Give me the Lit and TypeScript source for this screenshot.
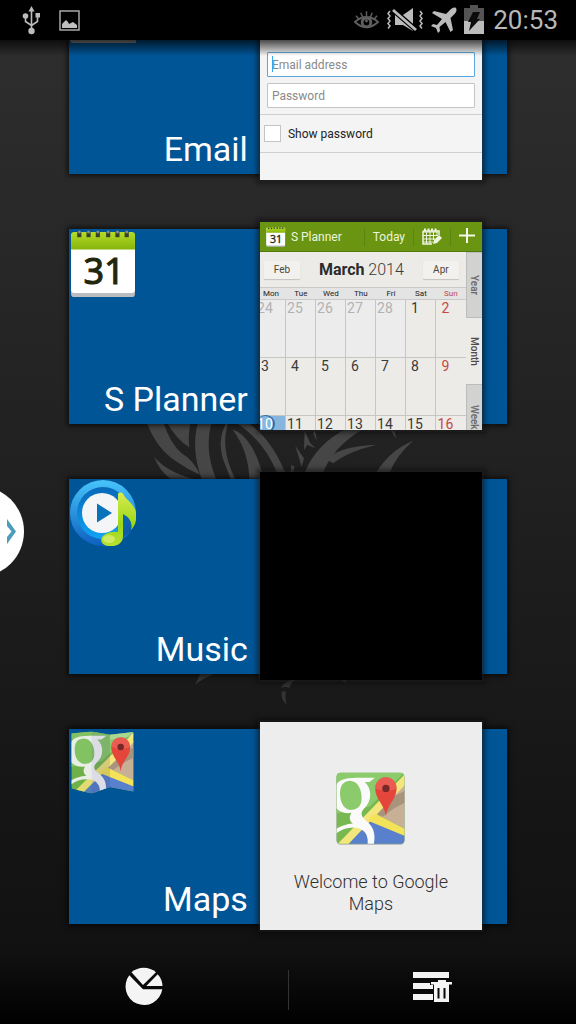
import { LitElement, html, svg, css } from "lit";
import { customElement, property } from "lit/decorators.js";

const plannerIcon = html`<svg viewBox="0 0 64 66" aria-hidden="true">
  <defs>
    <linearGradient id="lime" x1="0" y1="0" x2="0" y2="1">
      <stop offset="0" stop-color="#b4dc28" /><stop offset="1" stop-color="#86b40a" />
    </linearGradient>
  </defs>
  <rect x="1" y="5" width="62" height="60" rx="3" fill="#b9bcc0" />
  <rect x="1" y="3" width="62" height="58" rx="3" fill="#fff" />
  <path d="M1 19V5a3 3 0 0 1 3-3h56a3 3 0 0 1 3 3v14z" fill="url(#lime)" />
  ${[9, 18, 27, 37, 46, 55].map((x) => svg`<path d="M${x} 2v5" stroke="#3a3f30" stroke-width="4" /><circle cx=${x} cy="2" r="1.5" fill="#888" />`)}
  <text x="33" y="52" text-anchor="middle" font-family="'Noto Sans', 'Open Sans', sans-serif" font-weight="400" font-size="35" fill="#1f260c" stroke="#1f260c" stroke-width="1">31</text>
</svg>`;

const emailIcon = html`<svg viewBox="0 0 64 66" aria-hidden="true">
  <rect x="0" y="14" width="66" height="47" rx="3" fill="#a0a0a0" />
  <rect x="0" y="14" width="66" height="43" rx="3" fill="#e8e8e8" />
  <path d="M2 16l31 26 31-26" fill="none" stroke="#a8a8a8" stroke-width="2" />
</svg>`;

const musicIcon = html`<svg viewBox="0 0 66 66" aria-hidden="true">
  <defs>
    <linearGradient id="ring" x1="0" y1="0" x2="0" y2="1">
      <stop offset="0" stop-color="#48c4fa" /><stop offset="1" stop-color="#0d5fc0" />
    </linearGradient>
    <linearGradient id="disc" x1="0" y1="0" x2="0" y2="1">
      <stop offset="0" stop-color="#0868b8" /><stop offset="1" stop-color="#10a4f4" />
    </linearGradient>
    <linearGradient id="note" x1="0" y1="0" x2="0" y2="1">
      <stop offset="0" stop-color="#d8ec50" /><stop offset=".6" stop-color="#9cd818" /><stop offset="1" stop-color="#b8e030" />
    </linearGradient>
  </defs>
  <circle cx="33" cy="33" r="33" fill="url(#ring)" />
  <circle cx="33" cy="33" r="26" fill="url(#disc)" />
  <circle cx="32" cy="33" r="20" fill="#f3f5f7" />
  <path d="M27 23.500v19l15-9.500z" fill="#0873b8" />
  <path d="M53 28q12 4 9 22L50 60z" fill="#07508f" opacity=".65" />
  <path d="M48 13.500q3-2 5 0C56 22 71 25 65 44q-2 4-4 6 3-10-8-16v22c0 9-9 11-15 10-7-1-9-7-4-11 4-3 9-4 14-3z" fill="url(#note)" />
  <ellipse cx="39" cy="59" rx="6" ry="4" fill="#e4f488" opacity=".6" />
</svg>`;

const mapArt = svg`
  <path d="M80 36h206v216H80z" fill="#78b850" />
  <path d="M80 36h206L180 140 80 160z" fill="#8ccb6c" />
  <path d="M286 70L197 160l89 46z" fill="#c8b096" />
  <path d="M286 92l-40 20-49 48 22 10q34-28 67-42z" fill="#a8937c" />
  <path d="M178 180l108 46v26H118z" fill="#5880cc" />
  <path d="M286 42v33L116 252H84z" fill="#f2e67c" />
  <path d="M196 160l90 46v21L172 180z" fill="#f4e258" />
  <path fill-rule="evenodd" fill="#fafafa" d="M80 76C92 50 125 53 196 53L180 66H166C188 86 188 124 164 145C150 160 156 170 174 185C196 204 197 226 193 252H174C178 226 166 208 144 203Q108 198 80 220V206Q104 192 130 190C118 180 120 168 126 158C108 162 90 156 80 143ZM92 100C92 132 108 152 130 149C152 146 160 128 155 98C150 72 136 62 120 62C100 64 92 78 92 100Z" />`;

const pinArt = svg`
  <path d="M229 168C225 132 197 118 197 85a32 33 0 0 1 64 0C261 118 233 132 229 168Z" fill="#e4463c" />
  <path d="M197 85a32 33 0 0 1 64 0q-30 14-64 0z" fill="#f07068" opacity=".5" />
  <circle cx="229" cy="85" r="11" fill="#782828" />`;

const mapsIcon = html`<svg viewBox="34 46 192 192" aria-hidden="true">
  <defs><clipPath id="fold"><path d="M38 56L97 50 150 60 219 52V225L150 212 97 231 38 216Z" /></clipPath></defs>
  <g clip-path="url(#fold)">
    <g transform="translate(-34 18) scale(.887 .848)">${mapArt}</g>
    <path d="M38 50h59v181H38z" fill="#1e5a00" opacity=".08" />
    <path d="M97 44l53 16v160l-53 15z" fill="#202860" opacity=".14" />
    <path d="M150 44h69v20l-69 10z" fill="#fff" opacity=".25" />
  </g>
  <g transform="translate(-16 22) scale(.862)">${pinArt}</g>
</svg>`;

const mapsLogo = html`<svg viewBox="80 36 206 218" aria-hidden="true">
  <defs><clipPath id="tile"><rect x="82" y="38" width="202" height="212" rx="12" /></clipPath></defs>
  <rect x="81" y="40" width="204" height="213" rx="13" fill="#b0b0b0" />
  <g clip-path="url(#tile)">${mapArt}</g>
  ${pinArt}
</svg>`;

/** One recent application: blue plate, name, icon and a live thumbnail. */
@customElement("task-card")
export class TaskCard extends LitElement {
  @property() name = "";

  static styles = css`
    :host {
      display: grid;
      grid-template-columns: minmax(0, 1fr) 222px 25px;
      flex: none;
      background: #005596;
      box-shadow: 0 0 5px 2px rgba(0, 0, 0, 0.6);
    }
    .info {
      display: flex;
      flex-direction: column;
      justify-content: space-between;
      padding: 1px 12px 5px 1px;
    }
    .icon {
      width: 66px;
      height: 66px;
    }
    .name {
      margin: 0;
      font-size: 34px;
      line-height: 40px;
      font-weight: 400;
      text-align: right;
      color: #fff;
    }
    .thumb {
      height: 208px;
      margin: -7px 0 -6px;
      overflow: hidden;
      box-shadow: 0 0 0 2px rgba(40, 40, 40, 0.3), 0 0 4px 4px rgba(0, 0, 0, 0.35);
    }
  `;

  render() {
    return html`
      <div class="info">
        <div class="icon"><slot name="icon"></slot></div>
        <h2 class="name">${this.name}</h2>
      </div>
      <div class="thumb"><slot></slot></div>
    `;
  }
}

@customElement("email-preview")
export class EmailPreview extends LitElement {
  static styles = css`
    :host {
      display: flex;
      flex-direction: column;
      justify-content: flex-end;
      height: 100%;
      background: #f4f4f4;
      font-size: 12px;
      color: #222;
    }
    .fields {
      display: grid;
      gap: 6px;
      padding: 0 7px 6px;
    }
    .field {
      box-sizing: border-box;
      width: 100%;
      height: 25px;
      padding: 0 4px;
      border: 1px solid #c4c4c4;
      border-radius: 1px;
      background: #fff;
      font: inherit;
      outline: none;
    }
    .field::placeholder {
      color: #8a8a8a;
      opacity: 1;
    }
    .wrap {
      display: grid;
      position: relative;
    }
    .focused {
      border: 1px solid #5aa6de;
    }
    .caret {
      position: absolute;
      left: 5px;
      top: 4px;
      width: 1px;
      height: 16px;
      background: #33aaee;
    }
    .show {
      display: flex;
      align-items: center;
      gap: 7px;
      height: 37px;
      padding-left: 4px;
      border: solid #cfcfcf;
      border-width: 1px 0;
      margin-bottom: 27px;
    }
    .check {
      appearance: none;
      width: 17px;
      height: 17px;
      margin: 0;
      border: 1px solid #c4c4c4;
      background: #fff;
    }
  `;

  render() {
    return html`
      <div class="fields">
        <div class="wrap">
          <input class="field focused" type="email" placeholder="Email address" aria-label="Email address" />
          <span class="caret"></span>
        </div>
        <input class="field" type="password" placeholder="Password" aria-label="Password" />
      </div>
      <div class="show">
        <input class="check" type="checkbox" id="show" />
        <label for="show">Show password</label>
      </div>
    `;
  }
}

@customElement("planner-preview")
export class PlannerPreview extends LitElement {
  static styles = css`
    :host {
      display: flex;
      flex-direction: column;
      height: 100%;
      background: #ecebe7;
      color: #3a3a3a;
    }
    button {
      padding: 0;
      border: 0;
      background: none;
      font: inherit;
      color: inherit;
    }
    .bar {
      display: grid;
      grid-template-columns: 20px minmax(0, 1fr) 49px 37px 32px;
      align-items: center;
      flex: none;
      height: 30px;
      padding-left: 6px;
      box-sizing: border-box;
      border-bottom: 1px solid #55780e;
      background: #6a9512;
      color: #eef4de;
      font-size: 12px;
      line-height: 18px;
    }
    .bar svg {
      display: block;
      height: 20px;
      margin: 0 auto;
    }
    .title {
      padding-left: 5px;
    }
    .tool {
      display: flex;
      align-items: center;
      justify-content: center;
      border-left: 1px solid #5c8410;
      height: 18px;
    }
    .body {
      display: flex;
      flex: 1;
      min-height: 0;
    }
    .calendar {
      flex: 1;
      min-width: 0;
      overflow: hidden;
    }
    .month {
      display: flex;
      align-items: center;
      justify-content: space-between;
      height: 35px;
      padding: 0 7px 0 4px;
    }
    .month h3 {
      margin: 0;
      font-size: 16px;
      font-weight: 300;
    }
    .month b {
      font-weight: 700;
      color: #2c2c2c;
    }
    .step {
      width: 36px;
      height: 18px;
      border-radius: 1px;
      background: #f2f1ed;
      box-shadow: 0 1px 1px #c4c3bf;
      font-size: 10px;
      color: #4c4838;
    }
    table {
      width: 210px;
      margin-left: -4px;
      table-layout: fixed;
      border-spacing: 0;
    }
    th {
      height: 11px;
      padding: 0;
      border: solid #c9c9c9;
      border-width: 1px 0;
      background: #e4e4e4;
      font-size: 8px;
      line-height: 11px;
      font-weight: 400;
      color: #222;
    }
    td {
      box-sizing: border-box;
      height: 58px;
      padding: 0 11px 0 0;
      border: solid #c6c6c6;
      border-width: 0 1px 1px 0;
      vertical-align: top;
      text-align: center;
      font-size: 14px;
      line-height: 17px;
    }
    td:last-child {
      border-right: 0;
    }
    .past {
      background: #ececed;
      color: #b2b2b2;
    }
    .sunday {
      color: #c44848;
    }
    .today {
      background: #86b6de;
      color: #fff;
    }
    .today span {
      border-radius: 50%;
      box-shadow: 1px 0 0 1px #2b72a6;
    }
    .tabs {
      display: flex;
      flex-direction: column;
      flex: none;
      width: 16px;
      overflow: hidden;
    }
    .tab {
      flex: none;
      height: 66px;
      writing-mode: vertical-rl;
      border: 1px solid #bcbcbc;
      border-right: 0;
      background: #d2d2d1;
      font-size: 10px;
      font-weight: 500;
      color: #686868;
      text-align: center;
      line-height: 16px;
    }
    .current {
      border: 0;
      background: none;
      color: #4c4c4c;
    }
  `;

  private weeks = [
    [24, 25, 26, 27, 28, 1, 2],
    [3, 4, 5, 6, 7, 8, 9],
    [10, 11, 12, 13, 14, 15, 16],
  ];

  private cellClass(day: number, week: number, column: number) {
    if (week === 0 && day > 20) return "past";
    if (day === 10) return "today";
    return column === 6 ? "sunday" : "";
  }

  render() {
    return html`
      <div class="bar">
        ${plannerIcon}
        <span class="title">S Planner</span>
        <button class="tool">Today</button>
        <button class="tool" aria-label="Calendars">
          <svg viewBox="0 0 20 20" width="20" aria-hidden="true">
            <path d="M1 4h16v4M1 4v13h9" fill="none" stroke="#eef4de" stroke-width="1.500" />
            <path d="M1 5h15M1 8.500h15M1 12h12M1 15h10M4.500 5v12M8 5v12M11.500 5v8M15 5v4" stroke="#eef4de" stroke-width="1" />
            <path d="M3 1.500v3M6.500 1.500v3M10 1.500v3M13.500 1.500v3" stroke="#eef4de" stroke-width="2" />
            <path d="M11 17l1-4 5-5 3 3-5 5z" fill="#eef4de" />
          </svg>
        </button>
        <button class="tool" aria-label="Add event">
          <svg viewBox="0 0 20 20" width="20" aria-hidden="true"><path d="M11 1v15M3 8.500h16" stroke="#f4f8ea" stroke-width="2" /></svg>
        </button>
      </div>
      <div class="body">
        <div class="calendar">
          <div class="month">
            <button class="step">Feb</button>
            <h3><b>March</b> 2014</h3>
            <button class="step">Apr</button>
          </div>
          <table>
            <thead>
              <tr>
                ${["Mon", "Tue", "Wed", "Thu", "Fri", "Sat"].map((d) => html`<th scope="col">${d}</th>`)}
                <th scope="col" class="sunday">Sun</th>
              </tr>
            </thead>
            <tbody>
              ${this.weeks.map(
                (days, w) => html`<tr>
                  ${days.map((d, c) => html`<td class=${this.cellClass(d, w, c)}><span>${d}</span></td>`)}
                </tr>`
              )}
            </tbody>
          </table>
        </div>
        <div class="tabs">
          <button class="tab">Year</button>
          <button class="tab current">Month</button>
          <button class="tab">Week</button>
        </div>
      </div>
    `;
  }
}

@customElement("status-bar")
export class StatusBar extends LitElement {
  static styles = css`
    :host {
      display: block;
      flex: none;
      position: relative;
      z-index: 1;
    }
    .bar {
      display: flex;
      align-items: center;
      justify-content: space-between;
      height: 40px;
      padding: 0 18px 0 22px;
      background: #000;
      color: #b8b8b8;
    }
    .shade {
      position: absolute;
      top: 100%;
      left: 0;
      right: 0;
      height: 16px;
      background: linear-gradient(rgba(0, 0, 0, 0.7), rgba(0, 0, 0, 0));
      pointer-events: none;
    }
    .group {
      display: flex;
      align-items: center;
    }
    .left {
      gap: 18px;
    }
    .right {
      gap: 7px;
    }
    svg {
      display: block;
    }
    time {
      margin-left: 2px;
      font-size: 26px;
      line-height: 30px;
    }
  `;

  render() {
    return html`
      <div class="bar">
        <div class="group left">
          <svg width="19" height="30" viewBox="0 0 19 30" role="img" aria-label="USB connected">
            <path d="M9.500 4v21M3.500 12v4.500l6 4 6-4V10" fill="none" stroke="#bcbcbc" stroke-width="1.600" />
            <path d="M9.500 1l3 5.500h-6z" fill="#bcbcbc" />
            <circle cx="3.500" cy="11" r="2.800" fill="#bcbcbc" />
            <path d="M13.500 8h4.500v4.500h-4.500z" fill="#bcbcbc" />
            <circle cx="9.500" cy="26" r="3.200" fill="#bcbcbc" />
          </svg>
          <svg width="21" height="21" viewBox="0 0 21 21" role="img" aria-label="Screenshot saved">
            <rect x="1" y="1" width="19" height="19" fill="none" stroke="#a8a8a8" stroke-width="1.500" />
            <path d="M3 18v-4l4-4 2 2 1 2 4-2 4 3v3z" fill="#c0c0c0" />
          </svg>
        </div>
        <div class="group right">
          <svg width="25" height="22" viewBox="0 0 26 22" role="img" aria-label="Smart stay">
            <path d="M1 13Q13 3 25 13Q13 24 1 13z" fill="none" stroke="#5e5e5e" stroke-width="2" />
            <circle cx="13" cy="13.500" r="4.500" fill="none" stroke="#5e5e5e" stroke-width="3" />
            <circle cx="13" cy="12" r="1.500" fill="#5e5e5e" />
            <path d="M13 2v5M7 3.500l2 4.500M19 3.500l-2 4.500M2 6.500l3 3.500M24 6.500l-3 3.500" stroke="#5e5e5e" stroke-width="1.500" />
          </svg>
          <svg width="38" height="26" viewBox="0 0 38 26" role="img" aria-label="Vibrate">
            <path d="M4 4L2 6.500 4 9l-2 2.500L4 14l-2 2.500L4 19l-2 2.500M34 4l2 2.500L34 9l2 2.500-2 2.500 2 2.500-2 2.500 2 2.500" fill="none" stroke="#bcbcbc" stroke-width="1.500" />
            <path d="M9 8h8l10-7v23l-10-6H9z" fill="#bcbcbc" />
            <path d="M6 2l23 20" stroke="#000" stroke-width="5" />
            <path d="M7 3l23 20" stroke="#bcbcbc" stroke-width="2.800" />
          </svg>
          <svg width="26" height="26" viewBox="0 0 26 26" role="img" aria-label="Airplane mode">
            <path d="M25 1C23 0 21 1 19 3l-4 4L3 4 1 6l10 6-5 6-4-1-2 2 5 2 2 5 2-2-.500-4 6-5 5 10 2.500-2-2.500-12 4-4c2-2 2.500-4 1.500-6z" fill="#bcbcbc" />
          </svg>
          <svg width="20" height="30" viewBox="0 0 20 30" role="img" aria-label="Charging">
            <path d="M6 0h8v3h6v13H0V3h6z" fill="#545454" />
            <path d="M0 16h20v13H0z" fill="#bcbcbc" />
            <path d="M9 7h7l-3 7h3L5 26l2-9H4z" fill="#0c0c0c" />
          </svg>
          <time datetime="20:53">20:53</time>
        </div>
      </div>
      <div class="shade"></div>
    `;
  }
}

@customElement("app-root")
export class AppRoot extends LitElement {
  static styles = css`
    :host {
      display: flex;
      flex-direction: column;
      height: 100vh;
      overflow: hidden;
      position: relative;
      background: linear-gradient(#2f2f2f 0%, #212121 45%, #191919 68%, #111 93%, #000 100%);
      font-family: Roboto, "Noto Sans", sans-serif;
    }
    .art {
      position: absolute;
      inset: 0;
      width: 100%;
      height: 100%;
    }
    main {
      display: flex;
      flex-direction: column;
      justify-content: flex-end;
      flex: 1;
      min-height: 0;
      gap: 55px;
      padding: 0 12% 26px;
      position: relative;
    }
    task-card svg {
      display: block;
      width: 100%;
      height: 100%;
    }
    .player {
      height: 100%;
      background: #000;
    }
    .welcome {
      display: flex;
      flex-direction: column;
      align-items: center;
      gap: 26px;
      box-sizing: border-box;
      height: 100%;
      padding: 50px 30px 0;
      background: #ededed;
    }
    .logo {
      width: 69px;
      height: 73px;
    }
    .welcome p {
      margin: 0;
      font-size: 18px;
      line-height: 22px;
      font-weight: 300;
      text-align: center;
      color: #303030;
    }
    .handle {
      position: absolute;
      left: -67px;
      top: calc(52% - 46px);
      width: 91px;
      height: 91px;
      padding: 0 8px 0 0;
      border: 0;
      border-radius: 50%;
      background: #fff;
      display: flex;
      align-items: center;
      justify-content: flex-end;
      z-index: 2;
    }
    footer {
      display: grid;
      grid-template-columns: 1fr 1px 1fr;
      justify-items: center;
      align-items: start;
      flex: none;
      height: 54px;
      padding-top: 20px;
      position: relative;
    }
    .action {
      display: grid;
      padding: 0;
      border: 0;
      background: none;
    }
    .rule {
      width: 1px;
      height: 40px;
      background: #333;
    }
  `;

  render() {
    return html`
      <svg class="art" viewBox="0 0 576 1024" preserveAspectRatio="xMidYMid slice" aria-hidden="true">
        <g transform="translate(120 400) scale(.3333)" fill="#464646">
          <path d="M80 66Q110 150 175 188Q205 210 240 224Q220 180 185 160Q150 130 130 66Z" />
          <path d="M140 66Q170 120 208 142Q203 110 212 66Z" />
          <path d="M102 170Q120 215 152 236H218Q140 215 102 170Z" />
          <path d="M234 66Q212 150 245 236H288Q252 150 275 66Z" />
          <path d="M320 66Q285 130 318 200L332 236H345Q298 140 326 66Z" />
          <path d="M338 90Q365 94 395 140Q420 185 430 236H388Q385 150 338 90Z" />
          <path d="M345 66H380Q450 110 495 216H470Q430 120 345 66Z" />
          <path d="M526 137L552 175 545 200Z" />
          <path d="M554 92L570 128 586 145 562 134 552 150Z" />
          <path d="M585 90l6 32-12-22z" />
          <path d="M514 194l10 6-4 16h-8z" />
          <path d="M555 216Q590 130 680 86H730Q640 140 610 216Z" />
          <path d="M618 178Q660 138 770 134Q680 156 640 190Z" />
          <path d="M770 216Q810 150 880 122Q830 165 810 216Z" />
          <path d="M812 90l12 2 4 24z" />
          <g fill="#343434">
            <path d="M225 854L242 820H288Q250 835 225 854Z" />
            <path d="M482 864Q498 838 530 836Q510 850 508 864Q495 858 482 864Z" />
            <path d="M485 875Q482 900 500 914Q494 890 498 874Z" />
            <path d="M662 838h14l2 12z" />
          </g>
        </g>
      </svg>
      <status-bar></status-bar>
      <main>
        <task-card name="Email">
          <div slot="icon">${emailIcon}</div>
          <email-preview></email-preview>
        </task-card>
        <task-card name="S Planner">
          <div slot="icon">${plannerIcon}</div>
          <planner-preview></planner-preview>
        </task-card>
        <task-card name="Music">
          <div slot="icon">${musicIcon}</div>
          <div class="player"></div>
        </task-card>
        <task-card name="Maps">
          <div slot="icon">${mapsIcon}</div>
          <div class="welcome">
            <div class="logo">${mapsLogo}</div>
            <p>Welcome to Google Maps</p>
          </div>
        </task-card>
      </main>
      <button class="handle" aria-label="Open panel">
        <svg width="9" height="26" viewBox="0 0 9 26" aria-hidden="true">
          <path d="M0 0L9 12.500 0 25V18L4.500 12.500 0 7Z" fill="#4c9dba" />
        </svg>
      </button>
      <footer>
        <button class="action" aria-label="Task manager">
          <svg width="38" height="38" viewBox="0 3 38 38" overflow="visible" aria-hidden="true">
            <path d="M18 22.300L4.300 8.300A18.500 18.500 0 1 0 37.300 22.300z" fill="#f4f4f4" />
            <path d="M18 18L6.500 5.300A18.500 18.500 0 0 1 31 5.300z" fill="#f4f4f4" />
            <path d="M21.300 19L32.700 7.300A18.500 18.500 0 0 1 37.500 19z" fill="#f4f4f4" />
          </svg>
        </button>
        <div class="rule"></div>
        <button class="action" aria-label="Clear all">
          <svg width="40" height="34" viewBox="0 0 40 34" aria-hidden="true">
            <path d="M1 2h36v6H1zM1 13h17v2h3v4H1zM1 24h20v6H1z" fill="#f4f4f4" />
            <path fill-rule="evenodd" d="M19 12h7v-2h8v2h6v2.500h-3V32H22V14.500h-3zM25.500 18v10.500h2V18zM31.500 18v10.500h2V18z" fill="#f4f4f4" />
          </svg>
        </button>
      </footer>
    `;
  }
}
